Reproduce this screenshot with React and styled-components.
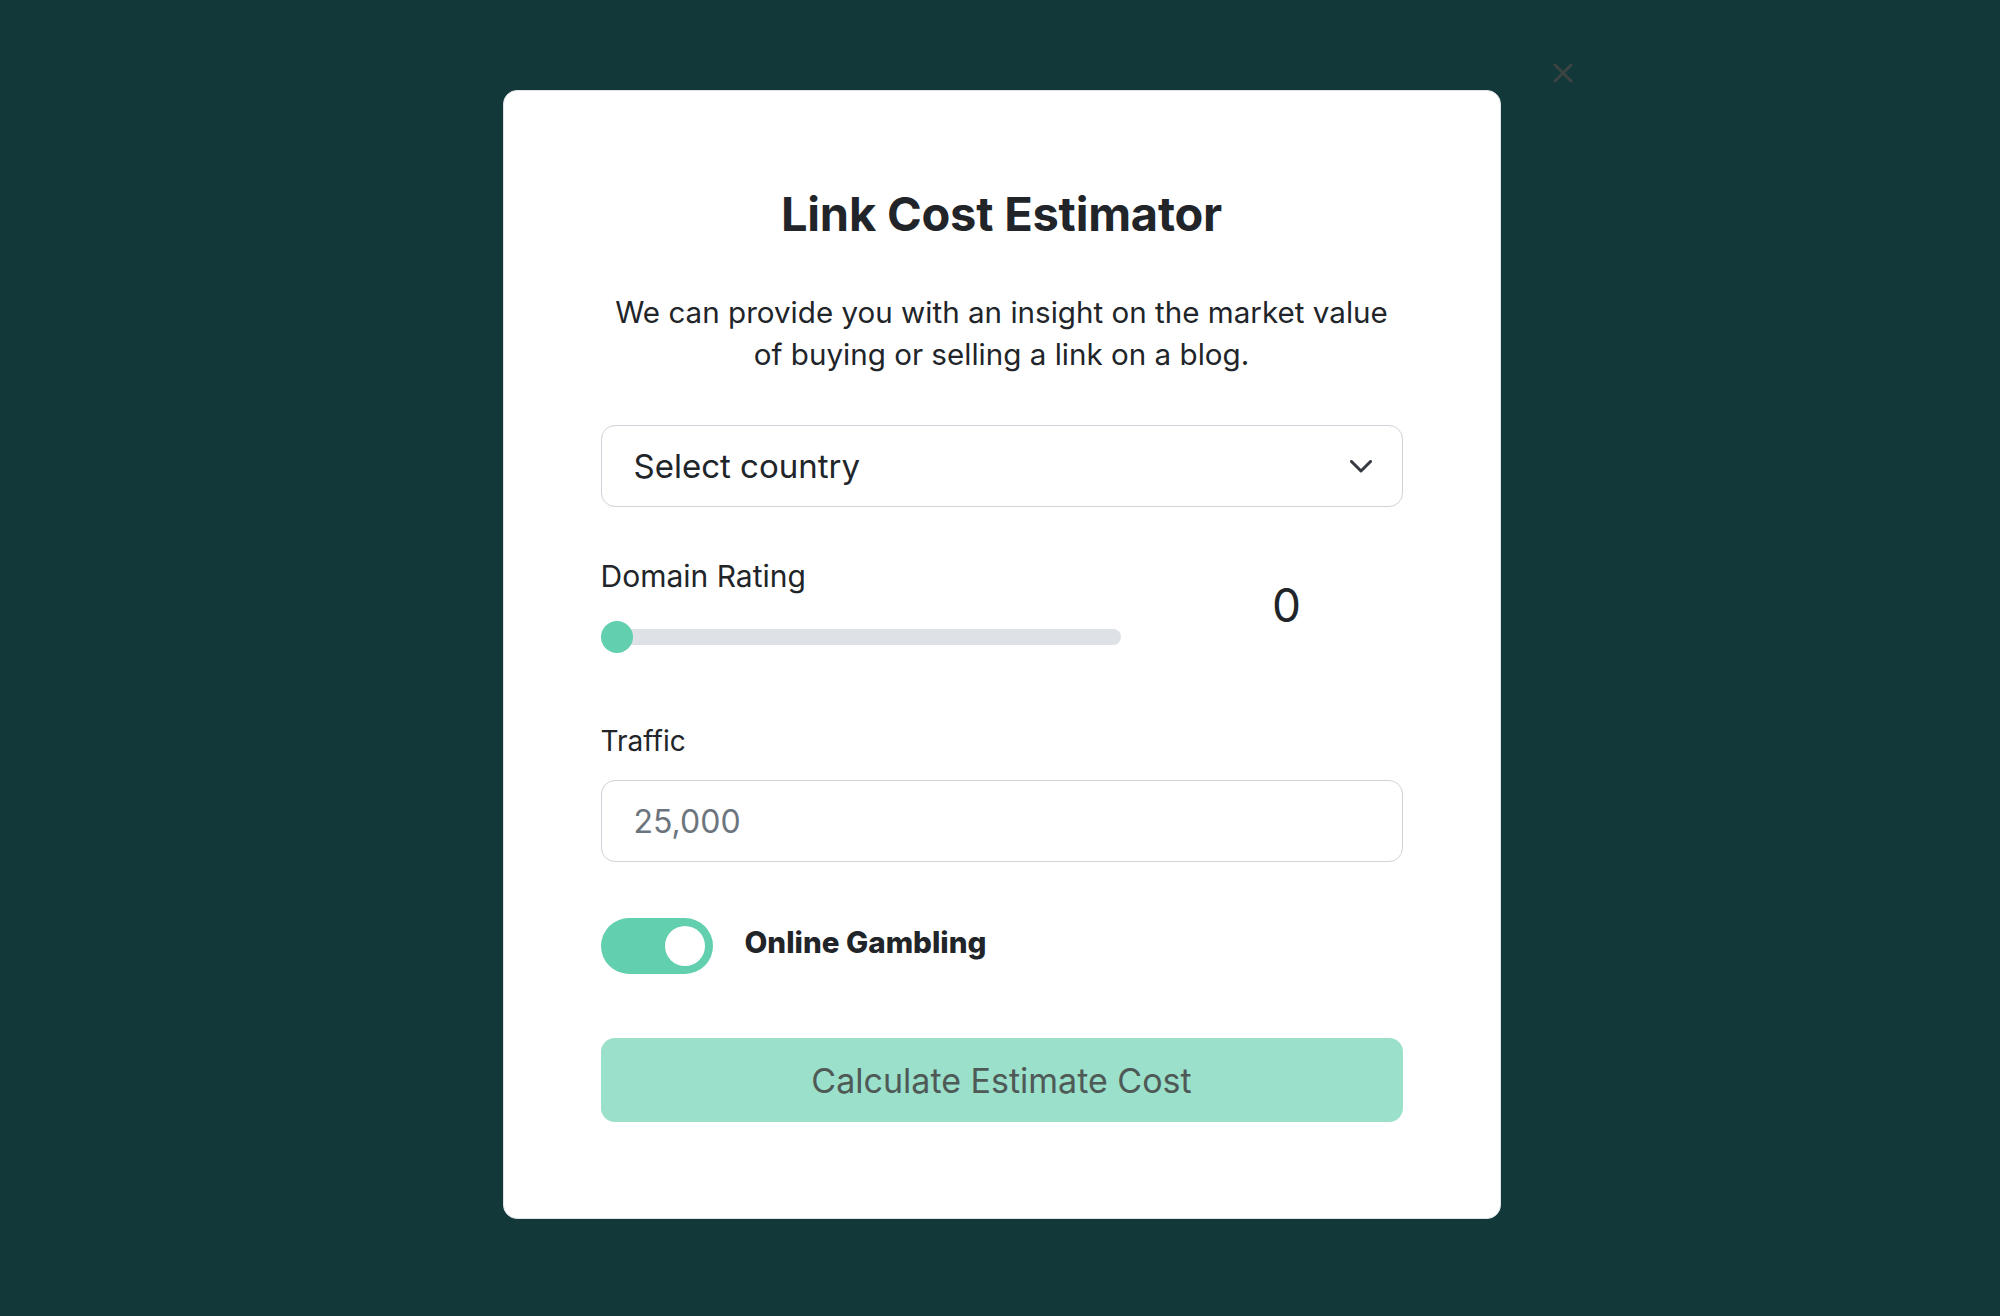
import React, { useState } from "react";
import styled, { createGlobalStyle } from "styled-components";

const GlobalStyle = createGlobalStyle`
  html, body {
    margin: 0;
    padding: 0;
  }
  body {
    background: #12383a;
    font-family: "Inter", "Noto Sans", sans-serif;
    color: #212529;
  }
`;

const Backdrop = styled.div`
  position: relative;
  min-height: 1316px;
  box-sizing: border-box;
  display: flex;
  justify-content: center;
  align-items: flex-start;
  padding: 90px 0 0 3px;
`;

const CloseButton = styled.button`
  position: absolute;
  top: 63px;
  left: 1553px;
  width: 20px;
  height: 20px;
  padding: 0;
  border: 0;
  background: none;
  color: #3b4442;
  cursor: pointer;
`;

const Modal = styled.div`
  width: 998px;
  box-sizing: border-box;
  padding: 95px 97px 96px;
  background: #fff;
  border: 1px solid #dee2e6;
  border-radius: 14px;
`;

const Title = styled.h2`
  margin: 0;
  font-size: 47px;
  line-height: 56px;
  font-weight: 700;
  letter-spacing: -0.2px;
  text-align: center;
  color: #212529;
`;

const Lead = styled.p`
  margin: 49px 0 0;
  font-size: 29.6px;
  line-height: 42px;
  text-align: center;
`;

const SelectBox = styled.div`
  margin-top: 50px;
  height: 82px;
  box-sizing: border-box;
  display: flex;
  align-items: center;
  justify-content: space-between;
  padding: 0 30px 0 32px;
  border: 1px solid #ced4da;
  border-radius: 14px;
  font-size: 33px;
  cursor: pointer;
`;

const Label = styled.div`
  margin-top: ${p => p.gap || 0}px;
  font-size: ${p => p.size || 28}px;
  line-height: 40px;
`;

const RatingRow = styled.div`
  margin-top: 49px;
  display: flex;
  align-items: center;
`;

const RatingControl = styled.div`
  width: 520px;
`;

const SliderWrap = styled.div`
  margin-top: 25px;
  height: 32px;
  display: flex;
  align-items: center;
`;

const Range = styled.input`
  -webkit-appearance: none;
  appearance: none;
  width: 520px;
  height: 32px;
  margin: 0;
  background: transparent;

  &::-webkit-slider-runnable-track {
    height: 16px;
    border-radius: 8px;
    background: #dee2e6;
  }
  &::-webkit-slider-thumb {
    -webkit-appearance: none;
    width: 32px;
    height: 32px;
    margin-top: -8px;
    border-radius: 50%;
    background: #62cfae;
    border: 0;
  }
`;

const RatingValue = styled.div`
  flex: 1;
  padding-left: 50px;
  text-align: center;
  font-size: 46px;
  line-height: 56px;
`;

const TextInput = styled.input`
  display: block;
  margin-top: 19px;
  width: 100%;
  height: 82px;
  box-sizing: border-box;
  padding: 0 32px;
  border: 1px solid #ced4da;
  border-radius: 14px;
  font-family: inherit;
  font-size: 32px;
  color: #212529;
  outline: none;

  &::placeholder {
    color: #6c757d;
  }
`;

const ToggleRow = styled.div`
  margin-top: 56px;
  display: flex;
  align-items: center;
  gap: 32px;
`;

const Toggle = styled.button`
  width: 112px;
  height: 56px;
  box-sizing: border-box;
  padding: 8px;
  border: 0;
  border-radius: 28px;
  background: ${p => (p.on ? "#62cfae" : "#dee2e6")};
  display: flex;
  align-items: center;
  justify-content: ${p => (p.on ? "flex-end" : "flex-start")};
  cursor: pointer;
`;

const Knob = styled.span`
  width: 40px;
  height: 40px;
  border-radius: 50%;
  background: #fff;
`;

const ToggleLabel = styled.span`
  padding-bottom: 8px;
  font-size: 29.6px;
  font-weight: 800;
`;

const SubmitButton = styled.button`
  display: block;
  margin-top: 64px;
  width: 100%;
  height: 84px;
  border: 0;
  border-radius: 14px;
  background: #9ae0cb;
  color: #4f5956;
  font-family: inherit;
  font-size: 34px;
  cursor: pointer;
`;

const Chevron = () => (
  <svg width="22" height="13" viewBox="0 0 22 13" fill="none">
    <polyline points="1.5,1.5 11,11 20.5,1.5" stroke="#343a40" strokeWidth="3" strokeLinecap="round" strokeLinejoin="round" />
  </svg>
);

export default function App() {
  const [rating, setRating] = useState(0);
  const [gambling, setGambling] = useState(true);

  return (
    <>
      <GlobalStyle />
      <Backdrop>
        <CloseButton aria-label="Close">
          <svg width="20" height="20" viewBox="0 0 20 20">
            <path d="M2 2L18 18M18 2L2 18" stroke="currentColor" strokeWidth="3" strokeLinecap="round" />
          </svg>
        </CloseButton>
        <Modal>
          <Title>Link Cost Estimator</Title>
          <Lead>
            We can provide you with an insight on the market value
            <br />
            of buying or selling a link on a blog.
          </Lead>

          <SelectBox>
            <span>Select country</span>
            <Chevron />
          </SelectBox>

          <RatingRow>
            <RatingControl>
              <Label size={30}>Domain Rating</Label>
              <SliderWrap>
                <Range
                  type="range"
                  min="0"
                  max="100"
                  value={rating}
                  onChange={e => setRating(Number(e.target.value))}
                />
              </SliderWrap>
            </RatingControl>
            <RatingValue>{rating}</RatingValue>
          </RatingRow>

          <Label gap={68}>Traffic</Label>
          <TextInput type="text" placeholder="25,000" />

          <ToggleRow>
            <Toggle on={gambling ? 1 : 0} onClick={() => setGambling(!gambling)}>
              <Knob />
            </Toggle>
            <ToggleLabel>Online Gambling</ToggleLabel>
          </ToggleRow>

          <SubmitButton>Calculate Estimate Cost</SubmitButton>
        </Modal>
      </Backdrop>
    </>
  );
}
